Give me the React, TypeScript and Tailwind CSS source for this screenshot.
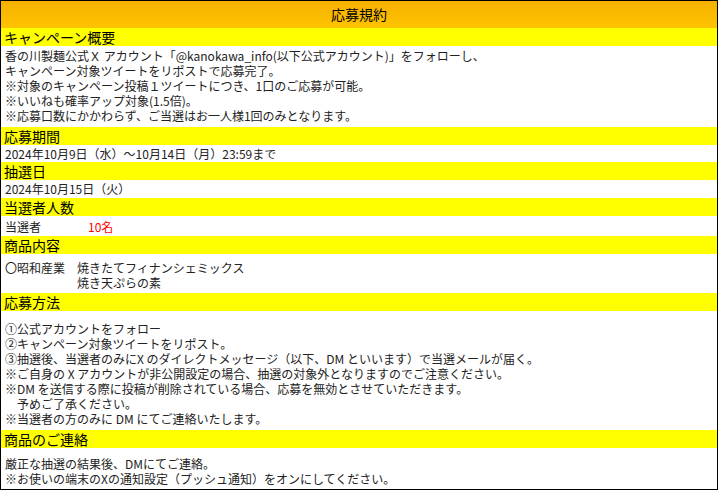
import React from "react";

const F = { fontFamily: '"Noto Sans CJK JP", "Noto Sans", sans-serif' };

function H({ children, h = "h-[18px]" }: { children: React.ReactNode; h?: string }) {
  return <div className={`bg-[#ffff00] ${h} flex items-center px-[3px] text-[14px] leading-none text-black`}>{children}</div>;
}

function B({ lines, cls = "" }: { lines: React.ReactNode[]; cls?: string }) {
  return (
    <div className={`px-[4px] text-[12px] leading-[15px] text-[#222] ${cls}`}>
      {lines.map((l, i) => (
        <div key={i} className="whitespace-pre">{l}</div>
      ))}
    </div>
  );
}

export default function App() {
  return (
    <div style={F} className="w-[720px] h-[492px] bg-white">
      <div className="w-[718px] h-[490px] border border-black flex flex-col">
        <div className="h-[27px] bg-[linear-gradient(#f5b000,#ffc400)] flex items-center justify-center text-[14px] text-black">応募規約</div>
        <H>キャンペーン概要</H>
        <B cls="pt-[2px] h-[81px]" lines={[
          "香の川製麺公式Ｘ アカウント「@kanokawa_info(以下公式アカウント)」をフォローし、",
          "キャンペーン対象ツイートをリポストで応募完了。",
          "※対象のキャンペーン投稿１ツイートにつき、1口のご応募が可能。",
          "※いいねも確率アップ対象(1.5倍)。",
          "※応募口数にかかわらず、ご当選はお一人様1回のみとなります。",
        ]} />
        <H>応募期間</H>
        <B cls="h-[17px] pt-[1px]" lines={["2024年10月9日（水）～10月14日（月）23:59まで"]} />
        <H>抽選日</H>
        <B cls="h-[18px] pt-[1px]" lines={["2024年10月15日（火）"]} />
        <H>当選者人数</H>
        <B cls="h-[20px] pt-[3px]" lines={[<span><span className="inline-block w-[83px]">当選者</span><span className="text-[#ff0000]">10名</span></span>]} />
        <H>商品内容</H>
        <B cls="h-[39px] pt-[6px]" lines={["〇昭和産業　焼きたてフィナンシェミックス", "　　　　　　焼き天ぷらの素"]} />
        <H>応募方法</H>
        <B cls="h-[119px] pt-[10px]" lines={[
          "①公式アカウントをフォロー",
          "②キャンペーン対象ツイートをリポスト。",
          "③抽選後、当選者のみにX のダイレクトメッセージ（以下、DM といいます）で当選メールが届く。",
          "※ご自身の X アカウントが非公開設定の場合、抽選の対象外となりますのでご注意ください。",
          "※DM を送信する際に投稿が削除されている場合、応募を無効とさせていただきます。",
          "　予めご了承ください。",
          "※当選者の方のみに DM にてご連絡いたします。",
        ]} />
        <H>商品のご連絡</H>
        <B cls="pt-[8px]" lines={[
          "厳正な抽選の結果後、DMにてご連絡。",
          "※お使いの端末のXの通知設定（プッシュ通知）をオンにしてください。",
        ]} />
      </div>
    </div>
  );
}
